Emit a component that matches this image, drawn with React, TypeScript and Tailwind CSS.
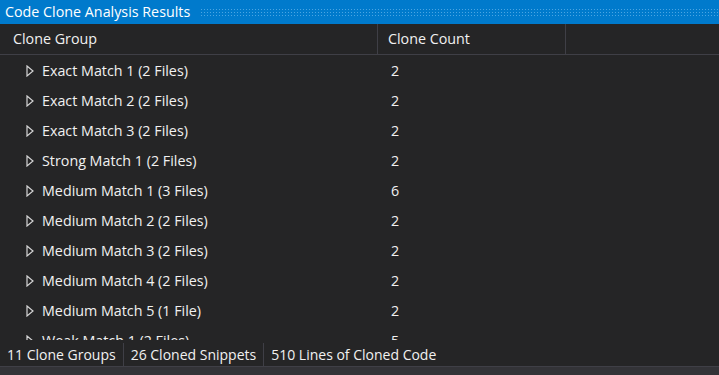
import React from "react";

const rows: [string, number][] = [
  ["Exact Match 1 (2 Files)", 2],
  ["Exact Match 2 (2 Files)", 2],
  ["Exact Match 3 (2 Files)", 2],
  ["Strong Match 1 (2 Files)", 2],
  ["Medium Match 1 (3 Files)", 6],
  ["Medium Match 2 (2 Files)", 2],
  ["Medium Match 3 (2 Files)", 2],
  ["Medium Match 4 (2 Files)", 2],
  ["Medium Match 5 (1 File)", 2],
  ["Weak Match 1 (2 Files)", 5],
];

function Arrow() {
  return (
    <svg width="8" height="12" viewBox="0 0 8 12" className="shrink-0">
      <path d="M1 1 L7 6 L1 11 Z" fill="none" stroke="#d4d4d4" strokeWidth="1.2" strokeLinejoin="miter" />
    </svg>
  );
}

export default function App() {
  return (
    <div
      className="w-[719px] h-[375px] bg-[#252526] text-[#f1f1f1] flex flex-col overflow-hidden text-[14.3px]"
      style={{ fontFamily: '"Open Sans", "Noto Sans", sans-serif' }}
    >
      <div className="h-[24px] bg-[#007acc] flex items-center shrink-0">
        <span className="pl-[5px] pr-[10px] text-white whitespace-nowrap leading-none">Code Clone Analysis Results</span>
        <div className="flex-1 h-[9px] mt-[1px] bg-[radial-gradient(circle,#4aa5e3_0.8px,transparent_1px)] bg-[length:3px_3px]" />
      </div>
      <div className="h-[31px] flex items-stretch border-b border-[#3f3f46] shrink-0">
        <div className="w-[378px] border-r border-[#3f3f46] flex items-center pl-[13px]">Clone Group</div>
        <div className="w-[188px] border-r border-[#3f3f46] flex items-center pl-[10px]">Clone Count</div>
        <div className="flex-1" />
      </div>
      <div className="flex-1 overflow-hidden pt-[1px]">
        {rows.map(([name, count]) => (
          <div key={name} className="h-[30px] flex items-center">
            <div className="w-[378px] flex items-center pl-[26px] gap-[8px]">
              <Arrow />
              <span>{name}</span>
            </div>
            <div className="pl-[13px]">{count}</div>
          </div>
        ))}
      </div>
      <div className="h-[27px] pt-[3px] flex items-stretch border-b border-[#3f3f46] shrink-0 bg-[#252526] text-[14px]">
        <div className="flex items-center px-[7px] border-r border-[#3f3f46]">11 Clone Groups</div>
        <div className="flex items-center px-[7px] border-r border-[#3f3f46]">26 Cloned Snippets</div>
        <div className="flex items-center px-[7px]">510 Lines of Cloned Code</div>
      </div>
      <div className="h-[8px] bg-[#333337] shrink-0" />
    </div>
  );
}
